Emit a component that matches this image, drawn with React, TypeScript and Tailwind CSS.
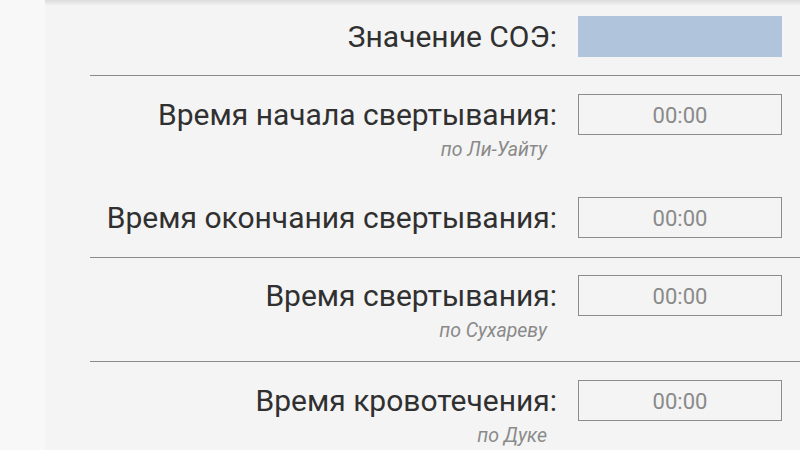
import React from "react";

function Label({ text, sub }: { text: string; sub?: string }) {
  return (
    <div className="flex flex-col items-end">
      <div className="text-[30px] leading-[41px] text-[#303030]">{text}</div>
      {sub && (
        <div className="mr-[10px] text-[19.5px] italic leading-[30px] text-[#8a8a8a]">{sub}</div>
      )}
    </div>
  );
}

function TimeBox() {
  return (
    <div className="flex h-[41px] w-[204px] shrink-0 items-center justify-center border border-[#8c8c8c] pt-[2px] text-[22px] text-[#8a8a8a]">
      00:00
    </div>
  );
}

function Row({ text, sub, children }: { text: string; sub?: string; children: React.ReactNode }) {
  return (
    <div className="flex h-[41px] items-start justify-end gap-[21px] pr-[18px]">
      <Label text={text} sub={sub} />
      {children}
    </div>
  );
}

export default function App() {
  return (
    <div
      className="flex h-[450px] w-[800px] overflow-hidden bg-[#f4f4f4]"
      style={{ fontFamily: "Roboto, 'Noto Sans', sans-serif" }}
    >
      <div className="w-[45px] shrink-0 bg-[#f8f8f8]" />
      <div className="relative flex flex-1 flex-col pl-[45px]">
        <div className="pointer-events-none absolute inset-x-0 top-0 h-[6px] bg-gradient-to-b from-[#dcdcdc] to-transparent" />
        <div className="h-[76px] border-b border-[#8a8a8a] pt-[16px]">
          <Row text="Значение СОЭ:">
            <div className="h-[41px] w-[204px] shrink-0 bg-[#b0c4dc]" />
          </Row>
        </div>
        <div className="flex h-[182px] flex-col gap-[62px] border-b border-[#8a8a8a] pt-[18px]">
          <Row text="Время начала свертывания:" sub="по Ли-Уайту">
            <TimeBox />
          </Row>
          <Row text="Время окончания свертывания:">
            <TimeBox />
          </Row>
        </div>
        <div className="h-[104px] border-b border-[#8a8a8a] pt-[17px]">
          <Row text="Время свертывания:" sub="по Сухареву">
            <TimeBox />
          </Row>
        </div>
        <div className="pt-[18px]">
          <Row text="Время кровотечения:" sub="по Дуке">
            <TimeBox />
          </Row>
        </div>
      </div>
    </div>
  );
}
